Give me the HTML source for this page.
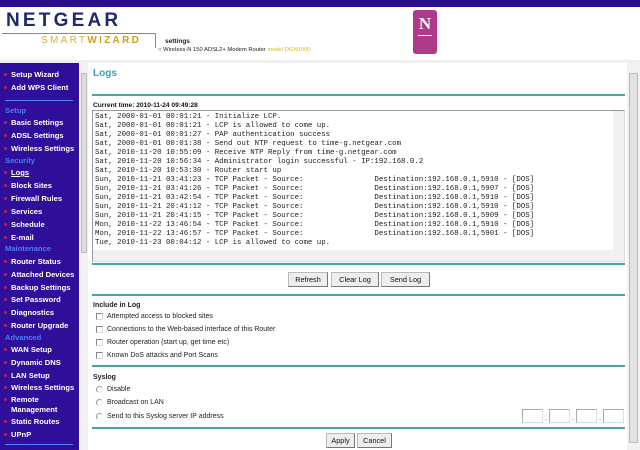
<!DOCTYPE html>
<html><head><meta charset="utf-8"><style>
*{margin:0;padding:0;box-sizing:border-box}
body{width:640px;height:450px;overflow:hidden;background:#fff;font-family:"Liberation Sans",sans-serif;position:relative}
.a{position:absolute;white-space:nowrap}
#top{left:0;top:0;width:640px;height:7px;background:#2a0d8c}
#side{left:0;top:63px;width:79px;height:387px;background:#2f0f99}
.m{position:absolute;left:11px;color:#fff;font-weight:bold;font-size:7.6px;white-space:nowrap}
.m::before{content:"";position:absolute;left:-7px;top:3px;width:3px;height:3px;background:#c2185b;border-radius:50%}
.h{position:absolute;left:5px;color:#4f7bff;font-weight:bold;font-size:7.6px}
.ln{position:absolute;left:5px;width:68px;height:1px;background:#4f7bff}
.teal{position:absolute;left:92px;width:533px;height:2px;background:#4aa3a8}
.lbl{font-size:7px;color:#222}
.cb{position:absolute;width:7px;height:7px;border:1px solid #888;border-right-color:#ddd;border-bottom-color:#ddd}
.rb{position:absolute;width:7px;height:7px;border:1px solid #999;border-radius:50%;border-right-color:#eee;border-bottom-color:#eee}
.btn{position:absolute;height:15px;background:#eee;border:1px solid #bbb;border-right-color:#777;border-bottom-color:#777;font-size:7.3px;text-align:center;line-height:13px;color:#111}
pre{font-family:"Liberation Mono",monospace;font-size:7.4px;line-height:9px;color:#222}
.ip{position:absolute;top:409px;width:21px;height:14px;border:1px solid #aaa;border-right-color:#ddd;border-bottom-color:#ddd}
</style></head><body>
<div class="a" id="top"></div>
<div class="a" style="left:6px;top:11px;font-size:19px;line-height:20px;font-weight:bold;color:#1e2a6e;letter-spacing:3.2px">NETGEAR</div>
<div class="a" style="left:2px;top:33px;width:154px;height:1px;background:#888"></div>
<div class="a" style="left:155px;top:33px;width:1px;height:15px;background:#888"></div>
<div class="a" style="left:41px;top:35px;font-size:10px;line-height:11px;color:#d4b040;letter-spacing:2.3px">SMART<b style="color:#c9a020">WIZARD</b></div>
<div class="a" style="left:165px;top:38px;font-size:6.5px;font-weight:bold;color:#222">settings</div>
<div class="a" style="left:158px;top:47px;font-size:5.8px;color:#222">○ Wireless-N 150 ADSL2+ Modem Router <span style="color:#d8b820">model DGN1000</span></div>
<div class="a" style="left:413px;top:10px;width:24px;height:44px;background:#b03a8a;border-radius:3px;color:#fff;font:bold 17px 'Liberation Serif',serif;text-align:center;padding-top:4px">N<div style="width:14px;height:1px;background:#fff;margin:1px auto"></div></div>
<div class="a" style="left:0;top:60px;width:640px;height:3px;background:#f0f0f0"></div>
<div class="a" id="side">
<div class="m" style="top:7px">Setup Wizard</div>
<div class="m" style="top:20px">Add WPS Client</div>
<div class="ln" style="top:37px"></div>
<div class="h" style="top:43px">Setup</div>
<div class="m" style="top:55px">Basic Settings</div>
<div class="m" style="top:68px">ADSL Settings</div>
<div class="m" style="top:81px">Wireless Settings</div>
<div class="h" style="top:93px">Security</div>
<div class="m" style="top:105px;text-decoration:underline">Logs</div>
<div class="m" style="top:118px">Block Sites</div>
<div class="m" style="top:131px">Firewall Rules</div>
<div class="m" style="top:144px">Services</div>
<div class="m" style="top:157px">Schedule</div>
<div class="m" style="top:170px">E-mail</div>
<div class="h" style="top:181px">Maintenance</div>
<div class="m" style="top:194px">Router Status</div>
<div class="m" style="top:207px">Attached Devices</div>
<div class="m" style="top:220px">Backup Settings</div>
<div class="m" style="top:232px">Set Password</div>
<div class="m" style="top:245px">Diagnostics</div>
<div class="m" style="top:258px">Router Upgrade</div>
<div class="h" style="top:270px">Advanced</div>
<div class="m" style="top:282px">WAN Setup</div>
<div class="m" style="top:295px">Dynamic DNS</div>
<div class="m" style="top:308px">LAN Setup</div>
<div class="m" style="top:320px">Wireless Settings</div>
<div class="m" style="top:332px;line-height:10px">Remote<br>Management</div>
<div class="m" style="top:354px">Static Routes</div>
<div class="m" style="top:367px">UPnP</div>
<div class="ln" style="top:381px"></div>
</div>
<div class="a" style="left:79px;top:63px;width:9px;height:387px;background:#f2f2f2"></div>
<div class="a" style="left:81px;top:73px;width:6px;height:180px;background:#ddd;border:1px solid #bbb"></div>
<div class="a" style="left:627px;top:63px;width:13px;height:387px;background:#f2f2f2"></div>
<div class="a" style="left:629px;top:73px;width:9px;height:370px;background:#e2e2e2;border:1px solid #bbb"></div>
<div class="a" style="left:93px;top:68px;font-size:10px;font-weight:bold;color:#3aa0b8">Logs</div>
<div class="teal" style="top:94px"></div>
<div class="a" style="left:93px;top:102px;font-size:6.6px;font-weight:bold;color:#111">Current time: 2010-11-24 09:49:28</div>
<div class="a" style="left:92px;top:110px;width:533px;height:152px;border:1px solid #999;border-right-color:#ddd;border-bottom-color:#ddd;overflow:hidden">
<pre style="position:absolute;left:2px;top:2px">Sat, 2000-01-01 00:01:21 - Initialize LCP.
Sat, 2000-01-01 00:01:21 - LCP is allowed to come up.
Sat, 2000-01-01 00:01:27 - PAP authentication success
Sat, 2000-01-01 00:01:38 - Send out NTP request to time-g.netgear.com
Sat, 2010-11-20 10:55:09 - Receive NTP Reply from time-g.netgear.com
Sat, 2010-11-20 10:56:34 - Administrator login successful - IP:192.168.0.2
Sat, 2010-11-20 10:53:30 - Router start up
Sun, 2010-11-21 03:41:23 - TCP Packet - Source:                Destination:192.168.0.1,5910 - [DOS]
Sun, 2010-11-21 03:41:26 - TCP Packet - Source:                Destination:192.168.0.1,5907 - [DOS]
Sun, 2010-11-21 03:42:54 - TCP Packet - Source:                Destination:192.168.0.1,5910 - [DOS]
Sun, 2010-11-21 20:41:12 - TCP Packet - Source:                Destination:192.168.0.1,5910 - [DOS]
Sun, 2010-11-21 20:41:15 - TCP Packet - Source:                Destination:192.168.0.1,5909 - [DOS]
Mon, 2010-11-22 13:46:54 - TCP Packet - Source:                Destination:192.168.0.1,5910 - [DOS]
Mon, 2010-11-22 13:46:57 - TCP Packet - Source:                Destination:192.168.0.1,5901 - [DOS]
Tue, 2010-11-23 00:04:12 - LCP is allowed to come up.</pre>
<div style="position:absolute;left:520px;top:0;width:12px;height:151px;background:#f0f0f0"></div>
<div style="position:absolute;left:0;top:139px;width:532px;height:12px;background:#f0f0f0"></div>
</div>
<div class="teal" style="top:263px"></div>
<div class="btn" style="left:288px;top:272px;width:40px">Refresh</div>
<div class="btn" style="left:331px;top:272px;width:48px">Clear Log</div>
<div class="btn" style="left:381px;top:272px;width:49px">Send Log</div>
<div class="teal" style="top:294px"></div>
<div class="a lbl" style="left:93px;top:302px;font-weight:bold">Include in Log</div>
<div class="cb" style="left:96px;top:313px"></div><div class="a lbl" style="left:107px;top:313px">Attempted access to blocked sites</div>
<div class="cb" style="left:96px;top:326px"></div><div class="a lbl" style="left:107px;top:326px">Connections to the Web-based interface of this Router</div>
<div class="cb" style="left:96px;top:339px"></div><div class="a lbl" style="left:107px;top:339px">Router operation (start up, get time etc)</div>
<div class="cb" style="left:96px;top:352px"></div><div class="a lbl" style="left:107px;top:352px">Known DoS attacks and Port Scans</div>
<div class="teal" style="top:365px"></div>
<div class="a lbl" style="left:93px;top:374px;font-weight:bold">Syslog</div>
<div class="rb" style="left:96px;top:386px"></div><div class="a lbl" style="left:107px;top:386px">Disable</div>
<div class="rb" style="left:96px;top:399px"></div><div class="a lbl" style="left:107px;top:399px">Broadcast on LAN</div>
<div class="rb" style="left:96px;top:413px"></div><div class="a lbl" style="left:107px;top:413px">Send to this Syslog server IP address</div>
<div class="ip" style="left:522px"></div><div class="a lbl" style="left:545px;top:415px">.</div>
<div class="ip" style="left:549px"></div><div class="a lbl" style="left:572px;top:415px">.</div>
<div class="ip" style="left:576px"></div><div class="a lbl" style="left:599px;top:415px">.</div>
<div class="ip" style="left:603px"></div>
<div class="teal" style="top:427px"></div>
<div class="btn" style="left:326px;top:433px;width:29px">Apply</div>
<div class="btn" style="left:357px;top:433px;width:35px">Cancel</div>
</body></html>
